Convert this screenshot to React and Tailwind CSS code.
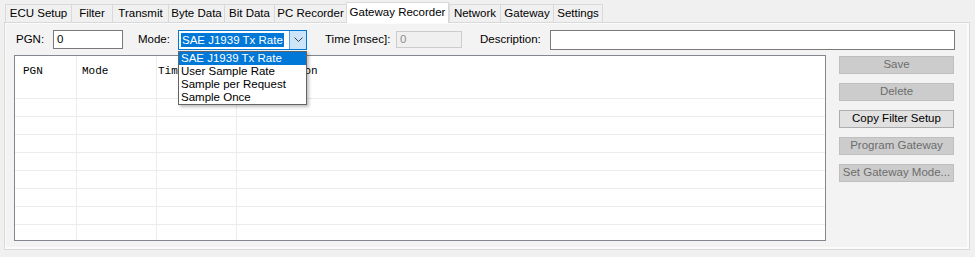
import React from "react";

const tabs = [
  { label: "ECU Setup", w: "w-[66px]" },
  { label: "Filter", w: "w-[41px]" },
  { label: "Transmit", w: "w-[56px]" },
  { label: "Byte Data", w: "w-[56px]" },
  { label: "Bit Data", w: "w-[50px]" },
  { label: "PC Recorder", w: "w-[72px]" },
  { label: "Gateway Recorder", w: "w-[103px]", active: true },
  { label: "Network", w: "w-[51px]" },
  { label: "Gateway", w: "w-[53px]" },
  { label: "Settings", w: "w-[50px]" },
];

const modes = ["SAE J1939 Tx Rate", "User Sample Rate", "Sample per Request", "Sample Once"];

const buttons = [
  { label: "Save", enabled: false },
  { label: "Delete", enabled: false },
  { label: "Copy Filter Setup", enabled: true },
  { label: "Program Gateway", enabled: false },
  { label: "Set Gateway Mode...", enabled: false },
];

const mono = { fontFamily: '"Liberation Mono", "Courier New", monospace' };

const App = () => {
  return (
    <div
      className="w-[975px] h-[257px] bg-[#f0f0f0] text-[11.5px] text-black overflow-hidden"
      style={{ fontFamily: '"Liberation Sans", Arial, sans-serif' }}
    >
      {/* Tabs */}
      <div className="flex items-end h-[22px] pl-[5px]">
        {tabs.map((t, i) =>
          t.active ? (
            <div
              key={i}
              className={`${t.w} h-[21px] -mb-px relative z-10 bg-white border border-b-0 border-[#d9d9d9] flex items-center justify-center pb-[1px] whitespace-nowrap`}
            >
              {t.label}
            </div>
          ) : (
            <div
              key={i}
              className={`${t.w} h-[18px] bg-[#f0f0f0] border-t border-l border-[#d9d9d9] ${
                i === tabs.length - 1 ? "border-r" : ""
              } flex items-center justify-center whitespace-nowrap`}
            >
              {t.label}
            </div>
          )
        )}
      </div>

      {/* Tab page */}
      <div className="ml-[4px] w-[966px] h-[228px] border border-[#d9d9d9] bg-[#f3f3f3] shadow-[inset_1px_1px_0_#fbfbfb,inset_-2px_-2px_0_#fbfbfb]">
        {/* Top row */}
        <div className="flex items-center h-[21px] mt-[6px] pl-[11px]">
          <span className="w-[37px]">PGN:</span>
          <div className="w-[70px] h-[19px] border border-[#7a7a7a] bg-white flex items-center pl-[3px]">
            0
          </div>
          <span className="ml-[15px] w-[40px]">Mode:</span>
          <div className="relative w-[129px] h-[20px] border border-[#0078d7] bg-white flex items-center">
            <div className="ml-[2px] h-[14px] bg-[#0078d7] text-white leading-[14px] px-[1px] whitespace-nowrap">
              SAE J1939 Tx Rate
            </div>
            <div className="ml-auto w-[17px] h-full bg-[#cce4f7] border-l border-[#569de5] flex items-center justify-center">
              <svg width="9" height="6" viewBox="0 0 9 6">
                <path d="M0.5 0.5 L4.5 4.5 L8.5 0.5" fill="none" stroke="#404040" strokeWidth="1" />
              </svg>
            </div>
            {/* Open list */}
            <div className="absolute left-[-1px] top-[20px] w-[129px] border border-[#646464] bg-white shadow-[2px_2px_3px_rgba(0,0,0,0.25)] z-20">
              {modes.map((m, i) => (
                <div
                  key={m}
                  className={`h-[13px] leading-[13px] pl-[2px] whitespace-nowrap ${
                    i === 0 ? "bg-[#0078d7] text-white" : "text-black"
                  }`}
                >
                  {m}
                </div>
              ))}
            </div>
          </div>
          <span className="ml-[18px] w-[71px]">Time [msec]:</span>
          <div className="w-[66px] h-[17px] border border-[#cccccc] bg-[#f0f0f0] flex items-center pl-[3px] text-[#8d8d8d]">
            0
          </div>
          <span className="ml-[18px] w-[70px]">Description:</span>
          <div className="w-[405px] h-[20px] border border-[#7a7a7a] bg-white"></div>
        </div>

        {/* Grid and buttons */}
        <div className="flex mt-[5px]">
          <div className="ml-[9px] w-[812px] h-[186px] border border-[#828790] bg-white overflow-hidden text-[11px]">
            <div className="flex h-[43px] border-b border-[#ececec]">
              <div className="w-[62px] border-r border-[#ececec] pl-[8px] pt-[7px]" style={mono}>
                PGN
              </div>
              <div className="w-[80px] border-r border-[#ececec] pl-[5px] pt-[7px]" style={mono}>
                Mode
              </div>
              <div className="w-[80px] border-r border-[#ececec] pl-[1px] pt-[7px]" style={mono}>
                Time
              </div>
              <div className="flex-1 pl-[8px] pt-[7px]" style={mono}>
                Description
              </div>
            </div>
            {[0, 1, 2, 3, 4, 5, 6, 7].map((r) => (
              <div key={r} className={`flex h-[18px] ${r < 7 ? "border-b border-[#ececec]" : ""}`}>
                <div className="w-[62px] border-r border-[#ececec]"></div>
                <div className="w-[80px] border-r border-[#ececec]"></div>
                <div className="w-[80px] border-r border-[#ececec]"></div>
                <div className="flex-1"></div>
              </div>
            ))}
          </div>

          <div className="ml-[13px] w-[115px] pt-[1px] flex flex-col gap-[9px]">
            {buttons.map((b) => (
              <div
                key={b.label}
                className={`h-[18px] flex items-center justify-center border whitespace-nowrap ${
                  b.enabled
                    ? "bg-[#e1e1e1] border-[#adadad] text-black"
                    : "bg-[#cccccc] border-[#bfbfbf] text-[#6d6d6d]"
                }`}
              >
                {b.label}
              </div>
            ))}
          </div>
        </div>
      </div>
    </div>
  );
};

export default App;
